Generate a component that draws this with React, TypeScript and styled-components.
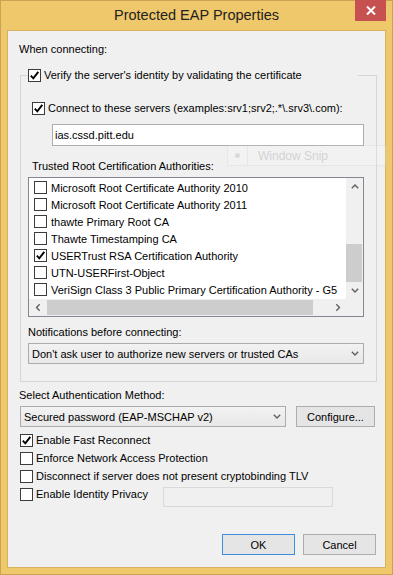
import React from 'react';
import styled, { createGlobalStyle } from 'styled-components';

const GlobalStyle = createGlobalStyle`
  html, body {
    margin: 0;
    padding: 0;
    background: #efc86b;
  }
  body {
    font-family: 'Liberation Sans', Arial, sans-serif;
    font-size: 11px;
    color: #000;
  }
  * {
    box-sizing: border-box;
  }
`;

const Window = styled.div`
  width: 393px;
  height: 575px;
  border: 1px solid #c9a352;
  background: #efc86b;
  display: flex;
  flex-direction: column;
`;

const TitleBar = styled.div`
  height: 29px;
  flex: none;
  display: grid;
  grid-template-columns: 1fr auto 1fr;
`;

const Title = styled.div`
  grid-column: 2;
  font-size: 14.5px;
  line-height: 29px;
  color: #222;
`;

const CloseButton = styled.div`
  grid-column: 3;
  justify-self: end;
  align-self: start;
  width: 31px;
  height: 21px;
  margin: -1px 6px 0 0;
  background: #c75050;
  display: flex;
  align-items: center;
  justify-content: center;
`;

const Panel = styled.div`
  position: relative;
  flex: 1;
  margin: 0 6px 6px;
  border: 1px solid #d6b160;
  background: #f0f0f0;
  display: flex;
  flex-direction: column;
  padding: 11px 9px 12px 12px;
`;

const Label = styled.div<{ $mt?: number; $ml?: number }>`
  height: 14px;
  line-height: 14px;
  white-space: nowrap;
  margin-top: ${(p) => p.$mt ?? 0}px;
  margin-left: ${(p) => p.$ml ?? 0}px;
`;

const GroupBox = styled.fieldset`
  min-width: 0;
  margin: 12px -1px 0 0;
  padding: 19px 12px 17px 7px;
  border: 1px solid #d5d5d5;
  display: flex;
  flex-direction: column;
`;

const Legend = styled.legend`
  width: 330px;
  height: 14px;
  padding: 0;
  display: flex;
  align-items: center;
  gap: 3px;
  white-space: nowrap;
`;

const CheckRow = styled.label<{ $height?: number; $ml?: number; $width?: number }>`
  display: flex;
  align-items: center;
  gap: 3px;
  flex: none;
  height: ${(p) => p.$height ?? 18}px;
  margin-left: ${(p) => p.$ml ?? 0}px;
  width: ${(p) => (p.$width ? `${p.$width}px` : 'auto')};
  white-space: nowrap;
`;

const Box = styled.span`
  width: 13px;
  height: 13px;
  flex: none;
  border: 1px solid #3c3c3c;
  background: #fff;
  display: inline-flex;
  align-items: center;
  justify-content: center;
`;

const Check = ({ checked }: { checked?: boolean }) => (
  <Box>
    {checked && (
      <svg width="11" height="11" viewBox="0 0 11 11">
        <path d="M1.8 5.6 L4.3 8.3 L9.3 1.8" fill="none" stroke="#000" strokeWidth="1.9" />
      </svg>
    )}
  </Box>
);

const ServerInput = styled.input`
  margin: 9px 0 0 24px;
  height: 22px;
  border: 1px solid #abadb3;
  background: #fff;
  padding: 0 2px;
  font: inherit;
  color: #000;
  outline: none;
`;

const ListBox = styled.div`
  margin-top: 4px;
  height: 140px;
  border: 1px solid #828790;
  background: #fff;
  display: grid;
  grid-template-columns: 1fr 17px;
  grid-template-rows: 1fr 17px;
  overflow: hidden;
`;

const Items = styled.div`
  overflow: hidden;
  padding-top: 1px;
`;

const Item = styled.div`
  height: 17px;
  display: flex;
  align-items: center;
  gap: 4px;
  padding-left: 5px;
  white-space: nowrap;
`;

const VScroll = styled.div`
  background: #f0f0f0;
  display: flex;
  flex-direction: column;
`;

const HScroll = styled.div`
  background: #f0f0f0;
  display: flex;
`;

const Corner = styled.div`
  background: #f0f0f0;
`;

const ArrowButton = styled.div`
  width: 17px;
  height: 17px;
  flex: none;
  display: flex;
  align-items: center;
  justify-content: center;
`;

const Track = styled.div<{ $vertical?: boolean }>`
  flex: 1;
  display: flex;
  flex-direction: ${(p) => (p.$vertical ? 'column' : 'row')};
  justify-content: ${(p) => (p.$vertical ? 'flex-end' : 'flex-start')};
`;

const Thumb = styled.div<{ $vertical?: boolean; $size: number }>`
  background: #cdcdcd;
  ${(p) =>
    p.$vertical
      ? `height: ${p.$size}px; margin: 0 1px 0 0;`
      : `width: ${p.$size}px; margin: 1px 0 1px 1px;`}
`;

const ChevronSvg = styled.svg<{ $rot: number }>`
  transform: rotate(${(p) => p.$rot}deg);
  flex: none;
`;

type Dir = 'up' | 'down' | 'left' | 'right';
const rotations: Record<Dir, number> = { down: 0, up: 180, left: 90, right: -90 };

const Chevron = ({ dir }: { dir: Dir }) => (
  <ChevronSvg $rot={rotations[dir]} width="8" height="5" viewBox="0 0 8 5">
    <path d="M0.8 0.8 L4 4 L7.2 0.8" fill="none" stroke="#606060" strokeWidth="1.4" />
  </ChevronSvg>
);

const Combo = styled.div<{ $width?: number; $mt?: number }>`
  height: 21px;
  flex: none;
  width: ${(p) => (p.$width ? `${p.$width}px` : 'auto')};
  margin-top: ${(p) => p.$mt ?? 0}px;
  border: 1px solid #acacac;
  background: linear-gradient(#f2f2f2, #e8e8e8);
  display: flex;
  align-items: center;
  justify-content: space-between;
  padding: 0 4px 0 3px;
  white-space: nowrap;
`;

const Row = styled.div<{ $mt?: number; $gap?: number }>`
  display: flex;
  align-items: flex-start;
  margin-top: ${(p) => p.$mt ?? 0}px;
  gap: ${(p) => p.$gap ?? 0}px;
`;

const CheckList = styled.div`
  display: flex;
  flex-direction: column;
  margin-top: 4px;
`;

const Button = styled.button<{ $primary?: boolean; $width: number }>`
  width: ${(p) => p.$width}px;
  height: 21px;
  padding: 0;
  border: 1px solid ${(p) => (p.$primary ? '#3d8ee0' : '#adadad')};
  background: #e5e5e5;
  font: inherit;
  color: #000;
`;

const DisabledBox = styled.input`
  width: 170px;
  height: 20px;
  margin-top: 2px;
  border: 1px solid #d9d9d9;
  background: #f0f0f0;
  font: inherit;
`;

const ButtonRow = styled.div`
  margin-top: auto;
  display: flex;
  justify-content: flex-end;
  gap: 8px;
`;

const SnipGhost = styled.div`
  position: absolute;
  left: 219px;
  top: 114px;
  width: 160px;
  height: 21px;
  border: 1px solid rgba(0, 0, 0, 0.045);
  background: rgba(255, 255, 255, 0.18);
  display: flex;
  align-items: center;
  color: #d2d2d2;
  font-size: 12px;
  pointer-events: none;
`;

const SnipIcon = styled.div`
  width: 20px;
  height: 100%;
  border-right: 1px solid rgba(0, 0, 0, 0.045);
  display: flex;
  align-items: center;
  justify-content: center;
  margin-right: 10px;

  &::after {
    content: '';
    width: 5px;
    height: 5px;
    border-radius: 50%;
    background: #dadada;
  }
`;

const certificates = [
  { name: 'Microsoft Root Certificate Authority 2010' },
  { name: 'Microsoft Root Certificate Authority 2011' },
  { name: 'thawte Primary Root CA' },
  { name: 'Thawte Timestamping CA' },
  { name: 'USERTrust RSA Certification Authority', checked: true },
  { name: 'UTN-USERFirst-Object' },
  { name: 'VeriSign Class 3 Public Primary Certification Authority - G5' },
];

const options = [
  { text: 'Enable Fast Reconnect', checked: true },
  { text: 'Enforce Network Access Protection' },
  { text: 'Disconnect if server does not present cryptobinding TLV' },
];

const App = () => (
  <>
    <GlobalStyle />
    <Window>
      <TitleBar>
        <Title>Protected EAP Properties</Title>
        <CloseButton>
          <svg width="10" height="9" viewBox="0 0 10 9">
            <path d="M1 0.5 L9 8.5 M9 0.5 L1 8.5" stroke="#fff" strokeWidth="2" />
          </svg>
        </CloseButton>
      </TitleBar>
      <Panel>
        <Label $ml={-1}>When connecting:</Label>
        <GroupBox>
          <Legend>
            <Check checked />
            Verify the server's identity by validating the certificate
          </Legend>
          <CheckRow $height={14} $ml={4}>
            <Check checked />
            Connect to these servers (examples:srv1;srv2;.*\.srv3\.com):
          </CheckRow>
          <ServerInput defaultValue="ias.cssd.pitt.edu" />
          <Label $mt={13} $ml={4}>Trusted Root Certification Authorities:</Label>
          <ListBox>
            <Items>
              {certificates.map((c) => (
                <Item key={c.name}>
                  <Check checked={c.checked} />
                  {c.name}
                </Item>
              ))}
            </Items>
            <VScroll>
              <ArrowButton>
                <Chevron dir="up" />
              </ArrowButton>
              <Track $vertical>
                <Thumb $vertical $size={38} />
              </Track>
              <ArrowButton>
                <Chevron dir="down" />
              </ArrowButton>
            </VScroll>
            <HScroll>
              <ArrowButton>
                <Chevron dir="left" />
              </ArrowButton>
              <Track>
                <Thumb $size={266} />
              </Track>
              <ArrowButton>
                <Chevron dir="right" />
              </ArrowButton>
            </HScroll>
            <Corner />
          </ListBox>
          <Label $mt={8}>Notifications before connecting:</Label>
          <Combo $mt={4}>
            Don't ask user to authorize new servers or trusted CAs
            <Chevron dir="down" />
          </Combo>
        </GroupBox>
        <Label $mt={6} $ml={-1}>Select Authentication Method:</Label>
        <Row $mt={4} $gap={10}>
          <Combo $width={266}>
            Secured password (EAP-MSCHAP v2)
            <Chevron dir="down" />
          </Combo>
          <Button $width={79}>Configure...</Button>
        </Row>
        <CheckList>
          {options.map((o) => (
            <CheckRow key={o.text}>
              <Check checked={o.checked} />
              {o.text}
            </CheckRow>
          ))}
          <Row>
            <CheckRow $width={143}>
              <Check />
              Enable Identity Privacy
            </CheckRow>
            <DisabledBox disabled />
          </Row>
        </CheckList>
        <ButtonRow>
          <Button $primary $width={73}>OK</Button>
          <Button $width={73}>Cancel</Button>
        </ButtonRow>
        <SnipGhost>
          <SnipIcon />
          Window Snip
        </SnipGhost>
      </Panel>
    </Window>
  </>
);

export default App;
